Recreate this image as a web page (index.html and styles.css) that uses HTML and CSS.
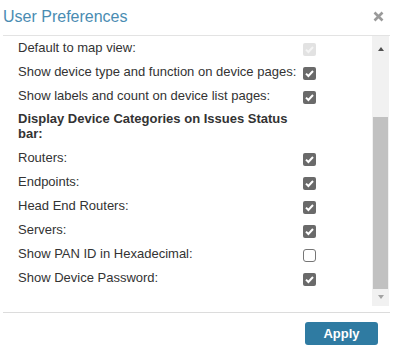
FILE: index.html
```html
<!DOCTYPE html>
<html lang="en">
<head>
<meta charset="utf-8">
<title>User Preferences</title>
<link rel="stylesheet" href="styles.css">
</head>
<body>
<div class="dialog">
  <header class="hdr">
    <h1 class="title">User Preferences</h1>
    <span class="close" aria-label="Close">
      <svg width="11" height="11" viewBox="0 0 11 11"><path d="M1.5 1.5 L9.5 9.5 M9.5 1.5 L1.5 9.5" stroke="#9a9a9a" stroke-width="2.6" stroke-linecap="butt"/></svg>
    </span>
  </header>
  <div class="body">
    <div class="rows">
      <div class="row"><span class="lbl">Default to map view:</span><span class="cb dis"><svg width="13" height="13" viewBox="0 0 13 13"><path d="M3 6.6 L5.4 9 L10 4" fill="none" stroke="#f4f4f4" stroke-width="2"/></svg></span></div>
      <div class="row"><span class="lbl">Show device type and function on device pages:</span><span class="cb on"><svg width="13" height="13" viewBox="0 0 13 13"><path d="M3 6.6 L5.4 9 L10 4" fill="none" stroke="#fff" stroke-width="2"/></svg></span></div>
      <div class="row"><span class="lbl">Show labels and count on device list pages:</span><span class="cb on"><svg width="13" height="13" viewBox="0 0 13 13"><path d="M3 6.6 L5.4 9 L10 4" fill="none" stroke="#fff" stroke-width="2"/></svg></span></div>
      <div class="row"><span class="lbl bold">Display Device Categories on Issues Status bar:</span></div>
      <div class="row"><span class="lbl">Routers:</span><span class="cb on"><svg width="13" height="13" viewBox="0 0 13 13"><path d="M3 6.6 L5.4 9 L10 4" fill="none" stroke="#fff" stroke-width="2"/></svg></span></div>
      <div class="row"><span class="lbl">Endpoints:</span><span class="cb on"><svg width="13" height="13" viewBox="0 0 13 13"><path d="M3 6.6 L5.4 9 L10 4" fill="none" stroke="#fff" stroke-width="2"/></svg></span></div>
      <div class="row"><span class="lbl">Head End Routers:</span><span class="cb on"><svg width="13" height="13" viewBox="0 0 13 13"><path d="M3 6.6 L5.4 9 L10 4" fill="none" stroke="#fff" stroke-width="2"/></svg></span></div>
      <div class="row"><span class="lbl">Servers:</span><span class="cb on"><svg width="13" height="13" viewBox="0 0 13 13"><path d="M3 6.6 L5.4 9 L10 4" fill="none" stroke="#fff" stroke-width="2"/></svg></span></div>
      <div class="row"><span class="lbl">Show PAN ID in Hexadecimal:</span><span class="cb off"></span></div>
      <div class="row"><span class="lbl">Show Device Password:</span><span class="cb on"><svg width="13" height="13" viewBox="0 0 13 13"><path d="M3 6.6 L5.4 9 L10 4" fill="none" stroke="#fff" stroke-width="2"/></svg></span></div>
    </div>
    <div class="sbar">
      <div class="sbtn"><span class="tri up"></span></div>
      <div class="track"><div class="thumb"></div></div>
      <div class="sbtn"><span class="tri down"></span></div>
    </div>
  </div>
  <div class="foot">
    <button class="apply" type="button">Apply</button>
  </div>
</div>
</body>
</html>
```

FILE: styles.css
```css
html, body {
  margin: 0;
  padding: 0;
  background: #fff;
}
body {
  font-family: "Liberation Sans", Arial, sans-serif;
  color: #333;
}
.dialog {
  width: 394px;
  height: 350px;
  box-sizing: border-box;
  padding: 0 4px 0 3px;
  display: flex;
  flex-direction: column;
}
.hdr {
  height: 35px;
  border-bottom: 1px solid #e3e3e3;
  display: flex;
  justify-content: space-between;
  align-items: flex-start;
  padding-right: 6px;
}
.title {
  margin: 8px 0 0 0;
  font-size: 16px;
  line-height: 18px;
  font-weight: normal;
  color: #4a8cb2;
}
.close {
  margin-top: 11px;
  width: 11px;
  height: 11px;
  display: block;
}
.close svg { display: block; }
.body {
  height: 270px;
  display: flex;
}
.rows {
  flex: 1;
  overflow: hidden;
  padding-left: 15px;
}
.row {
  display: flex;
  align-items: flex-start;
  min-height: 24px;
}
.lbl {
  width: 285px;
  font-size: 13px;
  line-height: 15px;
  padding: 4px 0 5px 0;
}
.lbl.bold {
  font-weight: bold;
  line-height: 14.5px;
}
.cb {
  width: 13px;
  height: 13px;
  box-sizing: border-box;
  border-radius: 2px;
  margin-top: 7px;
  display: block;
}
.cb svg { display: block; }
.cb.on { background: #6a6a6a; }
.cb.dis { background: #e2e2e2; }
.cb.off {
  background: #fff;
  border: 1px solid #767676;
  border-radius: 3px;
}
.sbar {
  width: 17px;
  margin-right: 1px;
  background: #f1f1f1;
  display: flex;
  flex-direction: column;
}
.sbtn {
  height: 17px;
  display: flex;
  align-items: center;
  justify-content: center;
}
.tri {
  width: 0;
  height: 0;
  border-left: 3.5px solid transparent;
  border-right: 3.5px solid transparent;
}
.tri.up {
  border-bottom: 4px solid #505050;
  margin-top: 8px;
}
.tri.down {
  border-top: 4px solid #a3a3a3;
  margin-top: -1px;
}
.track {
  flex: 1;
  display: flex;
  flex-direction: column;
  padding: 0 1px;
}
.thumb {
  flex: 1;
  margin-top: 64px;
  background: #c1c1c1;
}
.foot {
  margin-top: 6px;
  border-top: 1px solid #dcdcdc;
  display: flex;
  justify-content: flex-end;
  padding: 9px 12px 0 0;
}
.apply {
  width: 73px;
  height: 23px;
  border: none;
  border-radius: 3px;
  background: #2f7ba2;
  color: #fff;
  font-family: "Liberation Sans", Arial, sans-serif;
  font-weight: bold;
  font-size: 13px;
  padding: 0;
}
```
